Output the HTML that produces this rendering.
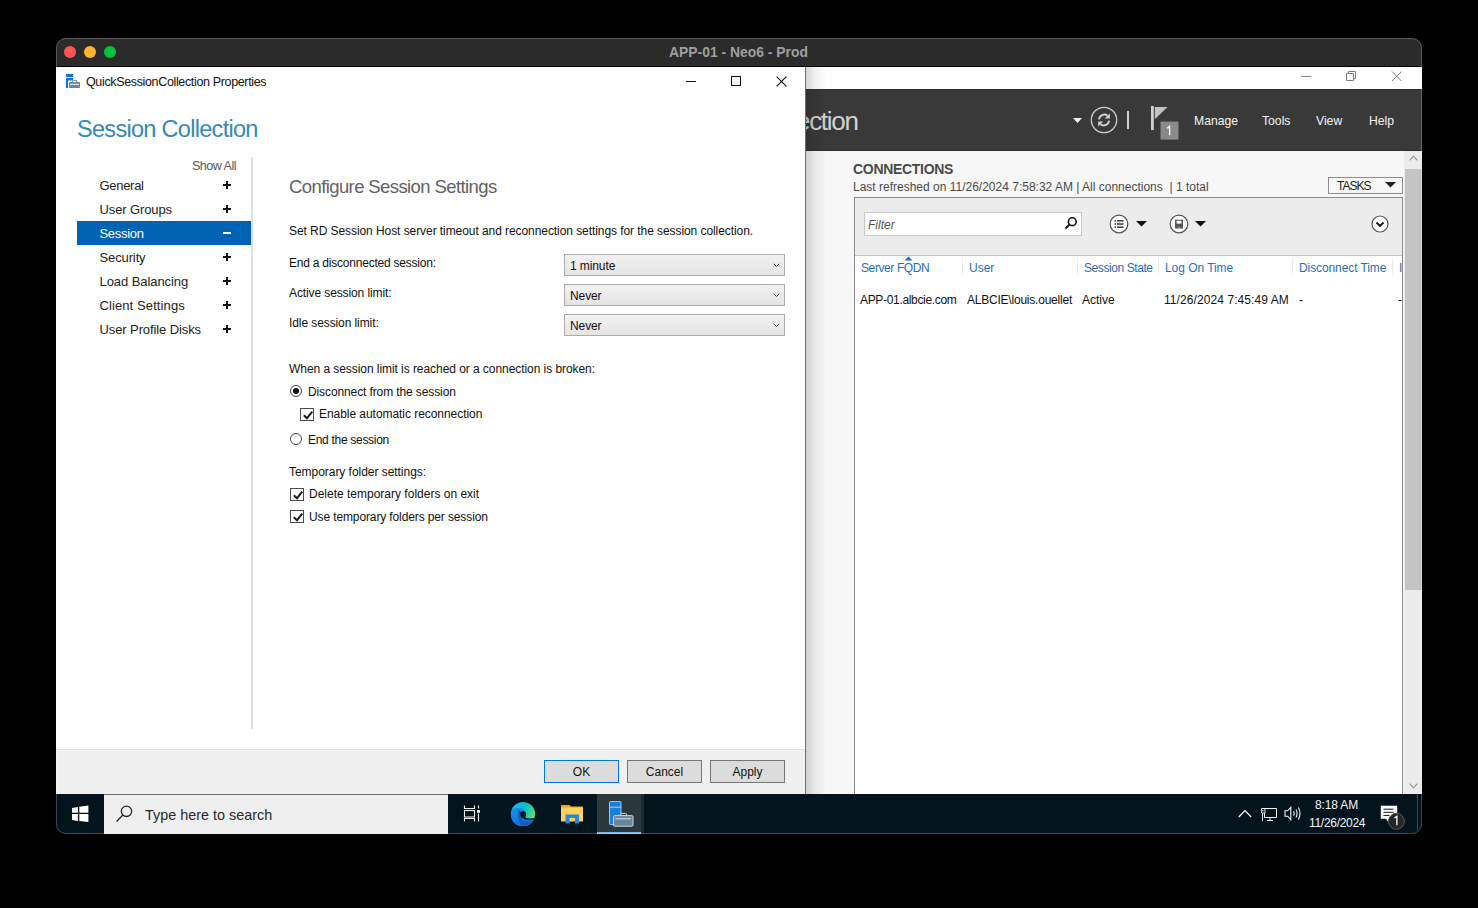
<!DOCTYPE html>
<html><head><meta charset="utf-8">
<style>
*{box-sizing:border-box;margin:0;padding:0}
html,body{width:1478px;height:908px;overflow:hidden;background:#000}
body{position:relative;font-family:"Liberation Sans",sans-serif;color:#000}
.a{position:absolute;white-space:pre;line-height:1}
#win{position:absolute;left:0;top:0;width:1478px;height:908px;clip-path:inset(38px 56px 74px 56px round 10px);background:#2b2b2b}
#mtitle{left:56px;top:38px;width:1366px;height:29px;background:#2b2b2b;border-bottom:1px solid #000}
.tl{position:absolute;width:12px;height:12px;border-radius:50%;top:46px}
/* dialog */
#dlg{left:56px;top:67px;width:750px;height:727px;background:#fff;border-right:1px solid #6e6e6e}
#foot{left:56px;top:749px;width:749px;height:45px;background:#f0f0f0;border-top:1px solid #dfdfdf}
.t12{font-size:12px;letter-spacing:-0.1px;color:#111}
.pl{position:absolute;left:223px;width:8px;height:8px;background:linear-gradient(#111,#111) 0 3px/8px 2px no-repeat,linear-gradient(#111,#111) 3px 0/2px 8px no-repeat}
.nav{font-size:13px;letter-spacing:-0.3px;color:#222}
.plus{font-size:15px;font-weight:700;color:#111}
.dd{position:absolute;left:564px;width:221px;height:22px;border:1px solid #acacac;background:linear-gradient(#f2f2f2,#e4e4e4)}
.btn{position:absolute;top:760px;height:23px;width:75px;border:1px solid #767676;background:#dcdcdc;font-size:12px;text-align:center;line-height:22px;color:#111}
.cb{position:absolute;width:14px;height:13px;border:1px solid #4a4a4a;background:#fff}
.rd{position:absolute;width:12px;height:12px;border:1px solid #444;border-radius:50%;background:#fff}
/* right window */
#rw{left:806px;top:67px;width:616px;height:727px;background:#f7f7f7}
#rtop{left:806px;top:67px;width:616px;height:22px;background:#fff}
#rhead{left:806px;top:89px;width:616px;height:62px;background:#393939;border-top:1px solid #2e2e2e;border-bottom:1px solid #2e2e2e}
/* taskbar */
#tb{left:56px;top:794px;width:1366px;height:40px;background:#03141c}
.hm{font-size:12.2px;color:#f4f4f4}
.ch{top:262px;font-size:12px;letter-spacing:-0.3px;color:#1e6fbf}
.rw{top:294px;font-size:12px;letter-spacing:-0.3px;color:#111}
.sep{top:256px;width:1px;height:20px;background:linear-gradient(rgba(220,220,220,0.2),#e4e4e4 50%,rgba(220,220,220,0.2))}
</style></head>
<body>
<div id="win">
  <div class="a" id="mtitle"></div>
  <div class="tl" style="left:64px;background:#fe5650"></div>
  <div class="tl" style="left:84px;background:#feb431"></div>
  <div class="tl" style="left:104px;background:#02c23e"></div>
  <div class="a" style="left:669px;top:46px;font-size:13.9px;font-weight:700;color:#9f9f9f">APP-01 - Neo6 - Prod</div>

  <!-- right window -->
  <div class="a" id="rw"></div>
  <div class="a" id="rtop"></div>
  <div class="a" style="left:1301px;top:76px;width:10px;height:1px;background:#888"></div>
  <svg class="a" style="left:1345px;top:71px" width="12" height="11" viewBox="0 0 12 11"><path d="M1.5 2.5H8.5V9.5H1.5Z M3.5 2.5V0.5H10.5V7.5H8.5" fill="none" stroke="#7a7a7a" stroke-width="1"/></svg>
  <svg class="a" style="left:1391px;top:71px" width="11" height="11" viewBox="0 0 11 11"><path d="M1 0.5L10.5 10M10.5 0.5L1 10" stroke="#7a7a7a" stroke-width="1"/></svg>
  <div class="a" id="rhead"></div>
  <div class="a" style="left:806px;top:89px;width:80px;height:62px;overflow:hidden"><div class="a" style="left:-10px;top:19px;font-size:26px;letter-spacing:-1.3px;color:#d2d2d2">ection</div></div>
  <svg class="a" style="left:1073px;top:118px" width="9" height="6" viewBox="0 0 9 6"><path d="M0 0H9L4.5 5Z" fill="#f0f0f0"/></svg>
  <svg class="a" style="left:1090px;top:106px" width="28" height="28" viewBox="0 0 28 28">
    <circle cx="14" cy="14" r="12.7" fill="none" stroke="#cdcdcd" stroke-width="1.3"/>
    <path d="M9 13.4 A5.3 5.3 0 0 1 17.6 9.8" fill="none" stroke="#d0d0d0" stroke-width="1.9"/>
    <path d="M19.9 7.4 L19.9 12.6 L14.7 12.6 Z" fill="#d0d0d0"/>
    <path d="M19 14.6 A5.3 5.3 0 0 1 10.4 18.2" fill="none" stroke="#d0d0d0" stroke-width="1.9"/>
    <path d="M8.1 20.6 L8.1 15.4 L13.3 15.4 Z" fill="#d0d0d0"/>
  </svg>
  <div class="a" style="left:1127px;top:111px;width:2px;height:18px;background:#d0d0d0"></div>
  <svg class="a" style="left:1150px;top:106px" width="30" height="34" viewBox="0 0 30 34">
    <rect x="1" y="0" width="2.8" height="24" fill="#d0d0d0"/>
    <path d="M4.8 1 L17.6 1 L4.8 13.3 Z" fill="#c2c2c2"/>
    <rect x="10.5" y="15.6" width="18" height="18" fill="#8a8a8a"/>
    <path d="M17.2 22.2 L19.6 20.4 V29.2" fill="none" stroke="#fff" stroke-width="1.3"/>
  </svg>
  <div class="a hm" style="left:1194px;top:115px">Manage</div>
  <div class="a hm" style="left:1262px;top:115px">Tools</div>
  <div class="a hm" style="left:1316px;top:115px">View</div>
  <div class="a hm" style="left:1369px;top:115px">Help</div>

  <!-- scrollbar -->
  <div class="a" style="left:1404px;top:151px;width:18px;height:643px;background:#ececec"></div>
  <div class="a" style="left:1405px;top:169px;width:17px;height:421px;background:#c4c4c4"></div>
  <svg class="a" style="left:1409px;top:155px" width="9" height="6" viewBox="0 0 9 6"><path d="M0.7 5.3L4.5 1.2L8.3 5.3" fill="none" stroke="#9a9a9a" stroke-width="1.2"/></svg>
  <svg class="a" style="left:1409px;top:783px" width="9" height="6" viewBox="0 0 9 6"><path d="M0.7 0.7L4.5 4.8L8.3 0.7" fill="none" stroke="#9a9a9a" stroke-width="1.2"/></svg>

  <div class="a" style="left:853px;top:162px;font-size:14px;letter-spacing:-0.3px;font-weight:700;color:#4a4a4a">CONNECTIONS</div>
  <div class="a t12" style="left:853px;top:181px;letter-spacing:0;color:#4a4a4a">Last refreshed on 11/26/2024 7:58:32 AM | All connections  | 1 total</div>
  <div class="a" style="left:1328px;top:177px;width:75px;height:17px;border:1px solid #8c8c8c;background:#f7f7f7"></div>
  <div class="a t12" style="left:1337px;top:180px;letter-spacing:-1px;color:#222">TASKS</div>
  <svg class="a" style="left:1385px;top:182px" width="11" height="6" viewBox="0 0 11 6"><path d="M0 0H11L5.5 5.5Z" fill="#222"/></svg>

  <div class="a" style="left:854px;top:197px;width:549px;height:597px;background:#fff;border:1px solid #8c8c8c;border-bottom:none"></div>
  <div class="a" style="left:855px;top:198px;width:547px;height:58px;background:#ececec;border-bottom:1px solid #c4c4c4"></div>
  <div class="a" style="left:864px;top:212px;width:218px;height:24px;background:#fff;border:1px solid #c8c8c8"></div>
  <div class="a" style="left:868px;top:219px;font-size:12px;font-style:italic;color:#555">Filter</div>
  <svg class="a" style="left:1064px;top:216px" width="14" height="14" viewBox="0 0 14 14"><circle cx="8.3" cy="5.7" r="3.9" fill="none" stroke="#111" stroke-width="1.6"/><path d="M5.6 8.4L1.5 12.5" stroke="#111" stroke-width="2"/></svg>
  <svg class="a" style="left:1109px;top:214px" width="20" height="20" viewBox="0 0 20 20"><circle cx="10" cy="10" r="8.8" fill="#fff" stroke="#555" stroke-width="1.2"/><rect x="5.5" y="6" width="1.6" height="1.6" fill="#444"/><rect x="8" y="6" width="6.5" height="1.6" fill="#444"/><rect x="5.5" y="9.2" width="1.6" height="1.6" fill="#444"/><rect x="8" y="9.2" width="6.5" height="1.6" fill="#444"/><rect x="5.5" y="12.4" width="1.6" height="1.6" fill="#444"/><rect x="8" y="12.4" width="6.5" height="1.6" fill="#444"/></svg>
  <svg class="a" style="left:1136px;top:221px" width="11" height="6" viewBox="0 0 11 6"><path d="M0 0H11L5.5 5.5Z" fill="#111"/></svg>
  <svg class="a" style="left:1169px;top:214px" width="20" height="20" viewBox="0 0 20 20"><circle cx="10" cy="10" r="8.8" fill="#fff" stroke="#555" stroke-width="1.2"/><path d="M6 5.8H14V14.4H6Z" fill="#555"/><rect x="7.6" y="6.8" width="4.8" height="2.8" fill="#fff"/><rect x="9.5" y="12.6" width="1" height="1" fill="#fff"/></svg>
  <svg class="a" style="left:1195px;top:221px" width="11" height="6" viewBox="0 0 11 6"><path d="M0 0H11L5.5 5.5Z" fill="#111"/></svg>
  <svg class="a" style="left:1370px;top:214px" width="20" height="20" viewBox="0 0 20 20"><circle cx="10" cy="10" r="8" fill="#fff" stroke="#555" stroke-width="1.2"/><path d="M6.5 8.5L10 12L13.5 8.5" fill="none" stroke="#111" stroke-width="1.8"/></svg>

  <svg class="a" style="left:904px;top:256px" width="9" height="5" viewBox="0 0 9 5"><path d="M0.5 4.5L4.5 0.5L8.5 4.5Z" fill="#1e6fbf"/></svg>
  <div class="a ch" style="left:861px;letter-spacing:-0.4px">Server FQDN</div>
  <div class="a ch" style="left:969px;letter-spacing:0">User</div>
  <div class="a ch" style="left:1084px;letter-spacing:-0.42px">Session State</div>
  <div class="a ch" style="left:1165px;letter-spacing:-0.05px">Log On Time</div>
  <div class="a ch" style="left:1299px;letter-spacing:-0.1px">Disconnect Time</div>
  <div class="a ch" style="left:1399px">I</div>
  <div class="a sep" style="left:962px"></div>
  <div class="a sep" style="left:1077px"></div>
  <div class="a sep" style="left:1158px"></div>
  <div class="a sep" style="left:1292px"></div>
  <div class="a sep" style="left:1392px"></div>
  <div class="a rw" style="left:860px;letter-spacing:-0.33px">APP-01.albcie.com</div>
  <div class="a rw" style="left:967px;letter-spacing:-0.22px">ALBCIE\louis.ouellet</div>
  <div class="a rw" style="left:1082px;letter-spacing:0">Active</div>
  <div class="a rw" style="left:1164px;letter-spacing:0.08px">11/26/2024 7:45:49 AM</div>
  <div class="a rw" style="left:1299px">-</div>
  <div class="a rw" style="left:1398px">-</div>
  <!-- shadow from dialog -->
  <div class="a" style="left:806px;top:67px;width:22px;height:727px;background:linear-gradient(90deg,rgba(0,0,0,0.16),rgba(0,0,0,0.06) 40%,rgba(0,0,0,0))"></div>

  <!-- dialog -->
  <div class="a" id="dlg"></div>
  <!-- dialog title icon -->
  <svg class="a" style="left:66px;top:74px" width="15" height="15" viewBox="0 0 15 15">
    <rect x="0" y="0" width="7.2" height="3" fill="#0b74d8"/>
    <path d="M0 4 H7.2 V5.2 Q7.2 6.5 5.2 6.5 H2.1 V14 H0Z" fill="#0b74d8"/>
    <rect x="6.6" y="6.6" width="4" height="2" fill="none" stroke="#7b93a7" stroke-width="1"/>
    <rect x="3" y="8" width="11" height="6" rx="0.8" fill="#6a869c"/>
    <path d="M4.3 10.3H12.7M4.6 10V11.2M12.4 10V11.2" stroke="#eef3f6" stroke-width="1"/>
  </svg>
  <div class="a" style="left:86px;top:76px;font-size:12.5px;letter-spacing:-0.35px;color:#111">QuickSessionCollection Properties</div>
  <div class="a" style="left:686px;top:81px;width:10px;height:1px;background:#111"></div>
  <div class="a" style="left:731px;top:76px;width:10px;height:10px;border:1px solid #111"></div>
  <svg class="a" style="left:776px;top:76px" width="11" height="11" viewBox="0 0 11 11"><path d="M0.6 0.6L10.4 10.4M10.4 0.6L0.6 10.4" stroke="#111" stroke-width="1.1"/></svg>

  <div class="a" style="left:77px;top:118px;font-size:23.5px;letter-spacing:-0.7px;color:#3489b6">Session Collection</div>
  <div class="a" style="left:192px;top:160px;font-size:12.6px;letter-spacing:-0.55px;color:#5a5a5a">Show All</div>
  <div class="a" style="left:251px;top:157px;width:2px;height:572px;background:#dedede"></div>

  <div class="a" style="left:77px;top:221px;width:174px;height:24px;background:#0063b1"></div>
  <div class="a nav" style="left:99.5px;top:179px">General</div>
  <div class="a nav" style="left:99.5px;top:203px;letter-spacing:-0.12px">User Groups</div>
  <div class="a nav" style="left:99.5px;top:227px;color:#fff">Session</div>
  <div class="a nav" style="left:99.5px;top:251px;letter-spacing:-0.12px">Security</div>
  <div class="a nav" style="left:99.5px;top:275px;letter-spacing:-0.07px">Load Balancing</div>
  <div class="a nav" style="left:99.5px;top:299px;letter-spacing:0.1px">Client Settings</div>
  <div class="a nav" style="left:99.5px;top:323px;letter-spacing:-0.1px">User Profile Disks</div>
  <div class="pl" style="top:181px"></div>
  <div class="pl" style="top:205px"></div>
  <div class="a" style="left:223px;top:232px;width:8px;height:2px;background:#fff"></div>
  <div class="pl" style="top:253px"></div>
  <div class="pl" style="top:277px"></div>
  <div class="pl" style="top:301px"></div>
  <div class="pl" style="top:325px"></div>

  <div class="a" style="left:289px;top:178px;font-size:18.5px;letter-spacing:-0.6px;color:#626262">Configure Session Settings</div>
  <div class="a t12" style="left:289px;top:225px;letter-spacing:-0.07px">Set RD Session Host server timeout and reconnection settings for the session collection.</div>
  <div class="a t12" style="left:289px;top:257px;letter-spacing:-0.22px">End a disconnected session:</div>
  <div class="a t12" style="left:289px;top:287px;letter-spacing:-0.11px">Active session limit:</div>
  <div class="a t12" style="left:289px;top:317px;letter-spacing:-0.09px">Idle session limit:</div>
  <div class="dd" style="top:254px"><span class="a t12" style="left:5px;top:5px">1 minute</span><svg class="a" style="left:208px;top:8px" width="7" height="5" viewBox="0 0 7 5"><path d="M0.8 0.8L3.5 3.5L6.2 0.8" fill="none" stroke="#444" stroke-width="1"/></svg></div>
  <div class="dd" style="top:284px"><span class="a t12" style="left:5px;top:5px">Never</span><svg class="a" style="left:208px;top:8px" width="7" height="5" viewBox="0 0 7 5"><path d="M0.8 0.8L3.5 3.5L6.2 0.8" fill="none" stroke="#444" stroke-width="1"/></svg></div>
  <div class="dd" style="top:314px"><span class="a t12" style="left:5px;top:5px">Never</span><svg class="a" style="left:208px;top:8px" width="7" height="5" viewBox="0 0 7 5"><path d="M0.8 0.8L3.5 3.5L6.2 0.8" fill="none" stroke="#444" stroke-width="1"/></svg></div>

  <div class="a t12" style="left:289px;top:363px;letter-spacing:-0.06px">When a session limit is reached or a connection is broken:</div>
  <div class="rd" style="left:290px;top:385px"><div class="a" style="left:2px;top:2px;width:6px;height:6px;border-radius:50%;background:#111"></div></div>
  <div class="a t12" style="left:308px;top:386px;letter-spacing:-0.11px">Disconnect from the session</div>
  <div class="cb" style="left:300px;top:408px"><svg class="a" style="left:1px;top:1px" width="11" height="11" viewBox="0 0 11 11"><path d="M1.8 5.3L5 8.2L10.2 1.7" fill="none" stroke="#1a1a1a" stroke-width="2"/></svg></div>
  <div class="a t12" style="left:319px;top:408px;letter-spacing:-0.05px">Enable automatic reconnection</div>
  <div class="rd" style="left:290px;top:433px"></div>
  <div class="a t12" style="left:308px;top:434px;letter-spacing:-0.3px">End the session</div>

  <div class="a t12" style="left:289px;top:466px;letter-spacing:-0.04px">Temporary folder settings:</div>
  <div class="cb" style="left:290px;top:488px"><svg class="a" style="left:1px;top:1px" width="11" height="11" viewBox="0 0 11 11"><path d="M1.8 5.3L5 8.2L10.2 1.7" fill="none" stroke="#1a1a1a" stroke-width="2"/></svg></div>
  <div class="a t12" style="left:309px;top:488px;letter-spacing:0px">Delete temporary folders on exit</div>
  <div class="cb" style="left:290px;top:510px"><svg class="a" style="left:1px;top:1px" width="11" height="11" viewBox="0 0 11 11"><path d="M1.8 5.3L5 8.2L10.2 1.7" fill="none" stroke="#1a1a1a" stroke-width="2"/></svg></div>
  <div class="a t12" style="left:309px;top:511px;letter-spacing:-0.12px">Use temporary folders per session</div>

  <div class="a" id="foot"></div>
  <div class="btn" style="left:544px;border-color:#0078d7">OK</div>
  <div class="btn" style="left:627px">Cancel</div>
  <div class="btn" style="left:710px">Apply</div>

  <!-- taskbar -->
  <div class="a" id="tb"></div>
  <svg class="a" style="left:72px;top:805px" width="17" height="18" viewBox="0 0 17 18">
    <path d="M0 2.9L5.9 1.9V7.8H0Z M7.3 1.7L16.4 0.6V7.8H7.3Z M0 9H5.9V15.9L0 15Z M7.3 9H16.4V17L7.3 16Z" fill="#fff"/>
  </svg>
  <div class="a" style="left:104px;top:794px;width:344px;height:40px;background:#efefef;border-top:1px solid #6a6a6a"></div>
  <svg class="a" style="left:116px;top:805px" width="17" height="17" viewBox="0 0 17 17"><circle cx="10.5" cy="6.3" r="5.2" fill="none" stroke="#222" stroke-width="1.3"/><path d="M6.8 10L0.6 16.5" stroke="#222" stroke-width="1.2"/></svg>
  <div class="a" style="left:145px;top:808px;font-size:14.4px;color:#2a2a2a">Type here to search</div>
  <svg class="a" style="left:463px;top:805px" width="18" height="17" viewBox="0 0 18 17">
    <path d="M1.5 0.5V3.5H11.5V0.5M1.5 16.5V13.5H11.5V16.5M15.5 0.5V3.5M15.5 8.5V16.5" fill="none" stroke="#f0f0f0" stroke-width="1.1"/>
    <rect x="1.5" y="5.5" width="10" height="6.5" fill="none" stroke="#f0f0f0" stroke-width="1.1"/>
    <rect x="14" y="5" width="3" height="2.8" fill="#f0f0f0"/>
  </svg>
  <svg class="a" style="left:508px;top:799px" width="30" height="30" viewBox="0 0 30 30">
    <defs>
      <linearGradient id="eg1" x1="0" y1="0.2" x2="1" y2="0.6"><stop offset="0" stop-color="#1eb6f2"/><stop offset="0.5" stop-color="#0fbccc"/><stop offset="1" stop-color="#55e36a"/></linearGradient>
      <linearGradient id="eg2" x1="0" y1="0" x2="0.3" y2="1"><stop offset="0" stop-color="#1892e8"/><stop offset="1" stop-color="#1670dc"/></linearGradient>
    </defs>
    <circle cx="15" cy="15" r="12.1" fill="url(#eg1)"/>
    <path d="M2.9 14.5 Q3.5 9 10 8.8 Q15.5 8.8 16.8 12.5 L17 17 Q17.5 19 21 19.6 Q24.5 20 26.2 19.2 Q23.5 27.2 15 27.2 Q3 27 2.9 14.5Z" fill="url(#eg2)"/>
    <path d="M10.5 10.5 Q8 19 13.5 26.5 Q18 27.5 22 25.5 Q24.5 23.5 25.3 21.3 Q19 24.5 14.5 21 Q11.5 17 13.5 12.5Z" fill="#1158b4" opacity="0.8"/>
    <ellipse cx="15.2" cy="15.6" rx="2.9" ry="3.4" fill="#02141c"/>
    <path d="M15.5 18.2 Q20 20.2 26.3 19 L25.8 20.6 Q20 22 15 19.5Z" fill="#02141c"/>
  </svg>
  <svg class="a" style="left:561px;top:805px" width="22" height="19" viewBox="0 0 22 19">
    <path d="M0 0.5 Q0 0 0.5 0 H8.5 L10 1.5 H21.5 Q22 1.5 22 2 V5 H0Z" fill="#e8a423"/>
    <path d="M0 2.5 H22 V16 Q22 16.6 21.4 16.6 H0.6 Q0 16.6 0 16 Z" fill="#fcd15f"/>
    <path d="M4.5 18.5 V9.5 H18 V18.5 H14 V13 H8.5 V18.5Z" fill="#2f86d8"/>
  </svg>
  <div class="a" style="left:597px;top:794px;width:44px;height:40px;background:#2b393f"></div>
  <div class="a" style="left:597px;top:832px;width:44px;height:2px;background:#76b9ed"></div>
  <div class="a" style="left:641px;top:794px;width:3px;height:40px;background:#1c2a30"></div>
  <svg class="a" style="left:609px;top:801px" width="25" height="26" viewBox="0 0 25 26">
    <rect x="0.5" y="0.5" width="11.5" height="23" rx="0.8" fill="#1a7fdc" stroke="#cfe0ef" stroke-width="0.8"/>
    <path d="M0.5 6.2H12" stroke="#cfe0ef" stroke-width="0.8"/>
    <rect x="11.5" y="12.4" width="6" height="2.4" rx="0.8" fill="none" stroke="#c5d1da" stroke-width="1"/>
    <rect x="4.5" y="14.6" width="19.5" height="10.6" rx="1.2" fill="#6b8598" stroke="#cdd8df" stroke-width="1"/>
    <path d="M6.5 17.8H22" stroke="#d7e0e6" stroke-width="1"/>
  </svg>

  <svg class="a" style="left:1238px;top:809px" width="14" height="9" viewBox="0 0 14 9"><path d="M0.8 8L7 1.5L13.2 8" fill="none" stroke="#fff" stroke-width="1.2"/></svg>
  <svg class="a" style="left:1260px;top:807px" width="18" height="15" viewBox="0 0 18 15">
    <path d="M1.5 1.5H16.5V10.5H4.5V6" fill="none" stroke="#f2f2f2" stroke-width="1"/>
    <path d="M1.5 1.5V6H5V1.5M2.2 3.2L3.2 4.2L4.2 3.2" fill="none" stroke="#f2f2f2" stroke-width="0.9"/>
    <path d="M2.5 6V14M10 10.5V13M7 13.5H13" fill="none" stroke="#f2f2f2" stroke-width="1"/>
  </svg>
  <svg class="a" style="left:1284px;top:806px" width="18" height="15" viewBox="0 0 18 15">
    <path d="M1 4.8H3.6L6.8 1.4V13.6L3.6 10.2H1Z" fill="none" stroke="#f2f2f2" stroke-width="1.1"/>
    <path d="M9.6 5.2Q10.8 7.5 9.6 9.8M12 3.6Q14.2 7.5 12 11.4M14.4 1.6Q17.6 7.5 14.4 13.4" fill="none" stroke="#f2f2f2" stroke-width="1.1"/>
  </svg>
  <div class="a" style="left:1315px;top:799px;font-size:12px;letter-spacing:-0.15px;color:#f4f4f4">8:18 AM</div>
  <div class="a" style="left:1309px;top:817px;font-size:12px;letter-spacing:-0.3px;color:#f4f4f4">11/26/2024</div>
  <svg class="a" style="left:1380px;top:805px" width="26" height="26" viewBox="0 0 26 26">
    <path d="M0.8 0.8H17.2V13.8H10L8.3 17L6 13.8H0.8Z" fill="#fff"/>
    <path d="M3.5 4.2H13.5M3.5 7.3H13.5M3.5 10.4H9.5" stroke="#111" stroke-width="1"/>
    <circle cx="16.4" cy="16.3" r="8" fill="#262626" stroke="#5a5a5a" stroke-width="1"/>
    <path d="M14.5 13.1L16.9 11.3V20.2" fill="none" stroke="#fff" stroke-width="1.3"/>
  </svg>
</div>
<div style="position:absolute;left:1417px;top:794px;width:1px;height:36px;background:#3a4552"></div>
<div style="position:absolute;left:56px;top:38px;width:1366px;height:796px;border-radius:10px;border:1px solid rgba(255,255,255,0.22)"></div>
</body></html>
